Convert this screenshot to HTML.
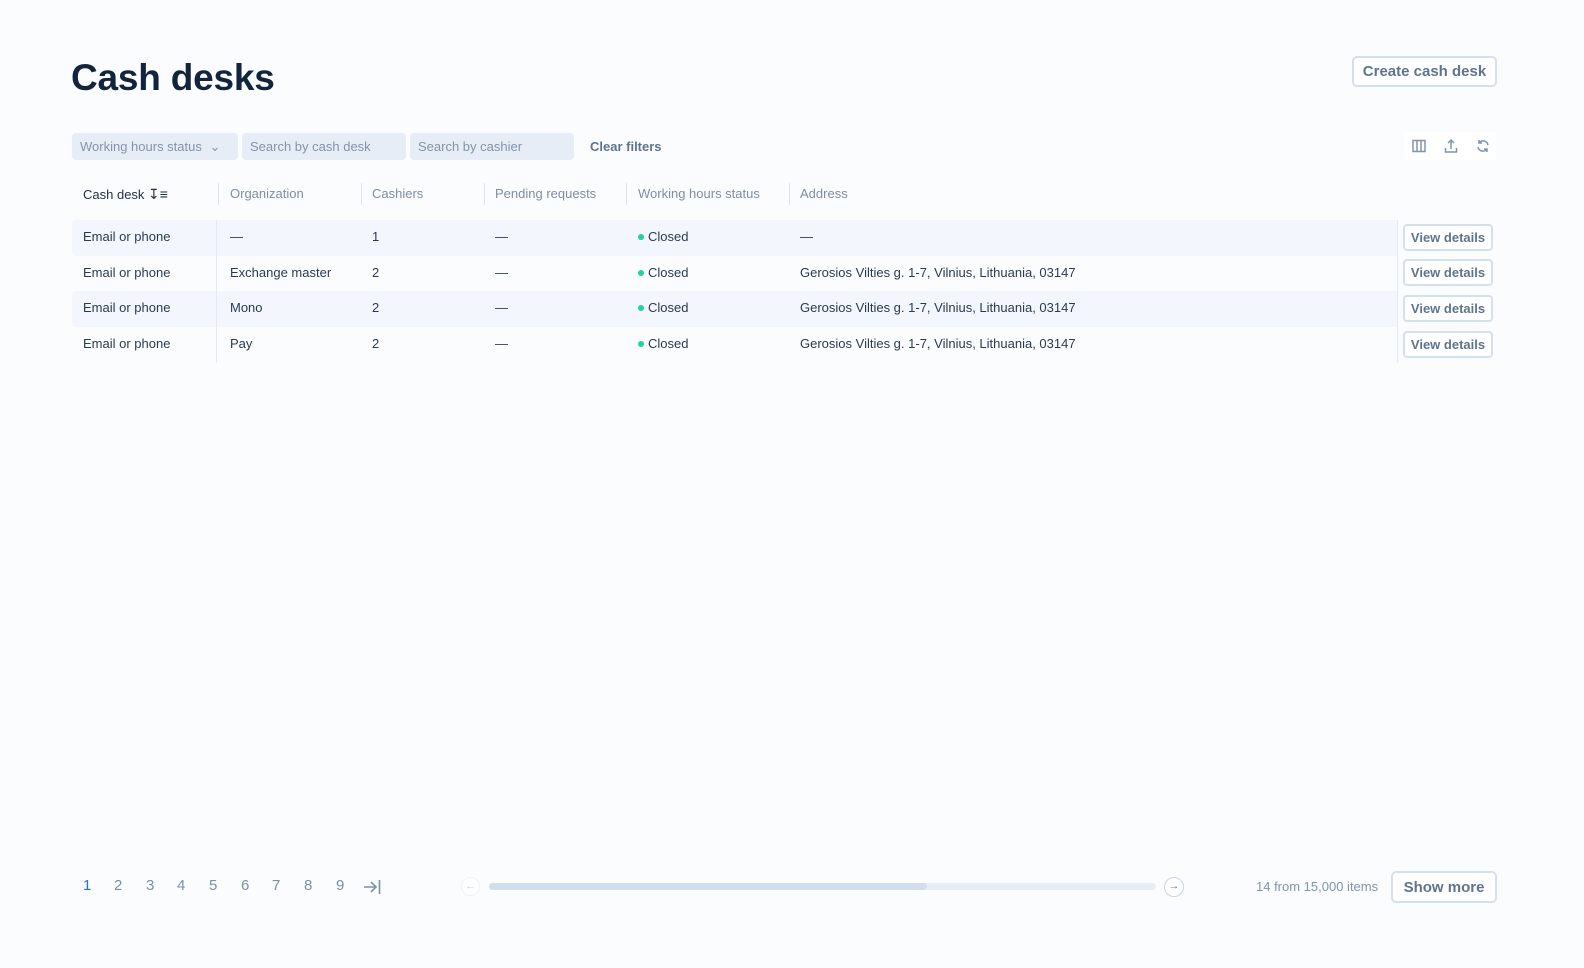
<!DOCTYPE html><html><head><style>
*{box-sizing:border-box;margin:0;padding:0}
body{width:1584px;height:968px;background:#fbfcfd;font-family:"Liberation Sans",sans-serif;position:relative;overflow:hidden;color:#27364d}
.a{position:absolute}
h1{position:absolute;left:71px;top:57px;font-size:37px;font-weight:bold;color:#15243d;letter-spacing:-0.2px}
.btn{position:absolute;border:2px solid #d5e0ee;border-radius:5px;background:#fff;color:#5f7490;font-weight:bold;display:flex;align-items:center;justify-content:center}
.f{position:absolute;top:133px;height:27px;background:#e6edf7;border-radius:4px;font-size:13px;color:#8394ad;padding-left:8px;line-height:27px}
.th{position:absolute;top:186px;font-size:13px;color:#7d8ea7}
.dv{position:absolute;top:183px;height:22px;width:1px;background:#dde5f0}
.row{position:absolute;left:72px;width:1325px;height:36px}
.c{position:absolute;font-size:13px;color:#2b3a52;line-height:36px}
.vd{position:absolute;left:1403px;width:90px;height:27px;border:2px solid #d5e0ee;border-radius:4px;background:#fff;font-size:13px;color:#5f7490;font-weight:bold;text-align:center;line-height:23px}
.dot{display:inline-block;width:6px;height:6px;border-radius:50%;background:#1ed3a0;margin-right:4px;vertical-align:1px}
.pg{position:absolute;top:877px;font-size:15px;color:#7d8ea7}
</style></head><body>
<h1>Cash desks</h1>
<div class="btn" style="left:1352px;top:56px;width:145px;height:31px;font-size:15px">Create cash desk</div>
<div class="f" style="left:72px;width:166px">Working hours status <span style="margin-left:4px">&#8964;</span></div>
<div class="f" style="left:242px;width:164px">Search by cash desk</div>
<div class="f" style="left:410px;width:164px">Search by cashier</div>
<div class="a" style="left:590px;top:139px;font-size:13px;font-weight:bold;color:#5f7490">Clear filters</div>
<div class="a" style="left:1404px;top:132px;width:92px;height:28px;background:#fff;border-radius:4px"></div>
<svg class="a" style="left:1411px;top:138px" width="16" height="16" viewBox="0 0 16 16" fill="none" stroke="#8294ad" stroke-width="1.5"><rect x="2" y="2.5" width="12" height="11"/><path d="M6 2.5v11M10 2.5v11"/></svg>
<svg class="a" style="left:1443px;top:138px" width="16" height="16" viewBox="0 0 16 16" fill="none" stroke="#8294ad" stroke-width="1.5"><path d="M8 11V2M5 5l3-3 3 3M2.5 10v4h11v-4"/></svg>
<svg class="a" style="left:1475px;top:138px" width="16" height="16" viewBox="0 0 16 16" fill="none" stroke="#8294ad" stroke-width="1.5"><path d="M13 7a5 5 0 0 0-9-2M3 9a5 5 0 0 0 9 2M4 2v3h3M12 14v-3H9"/></svg>
<div class="th" style="left:83px;color:#1f2e46">Cash desk <span style="font-size:14px">&#8615;&#8801;</span></div>
<div class="dv" style="left:218px"></div><div class="th" style="left:230px">Organization</div>
<div class="dv" style="left:361px"></div><div class="th" style="left:372px">Cashiers</div>
<div class="dv" style="left:484px"></div><div class="th" style="left:495px">Pending requests</div>
<div class="dv" style="left:626px"></div><div class="th" style="left:638px">Working hours status</div>
<div class="dv" style="left:789px"></div><div class="th" style="left:800px">Address</div>
<div class="row" style="top:220px;background:#f3f6fd;border-radius:4px 0 0 4px"></div>
<div class="row" style="top:291px;background:#f3f6fd;border-radius:4px 0 0 4px"></div>
<div class="a" style="left:216px;top:220px;width:1px;height:143px;background:#e3eaf4"></div>
<div class="a" style="left:1397px;top:220px;width:1px;height:143px;background:#e3eaf4"></div>
<div class="c" style="left:83px;top:219px">Email or phone</div><div class="c" style="left:230px;top:219px">—</div><div class="c" style="left:372px;top:219px">1</div><div class="c" style="left:495px;top:219px">—</div><div class="c" style="left:638px;top:219px"><span class="dot"></span>Closed</div><div class="c" style="left:800px;top:219px">—</div>
<div class="c" style="left:83px;top:255px">Email or phone</div><div class="c" style="left:230px;top:255px">Exchange master</div><div class="c" style="left:372px;top:255px">2</div><div class="c" style="left:495px;top:255px">—</div><div class="c" style="left:638px;top:255px"><span class="dot"></span>Closed</div><div class="c" style="left:800px;top:255px">Gerosios Vilties g. 1-7, Vilnius, Lithuania, 03147</div>
<div class="c" style="left:83px;top:290px">Email or phone</div><div class="c" style="left:230px;top:290px">Mono</div><div class="c" style="left:372px;top:290px">2</div><div class="c" style="left:495px;top:290px">—</div><div class="c" style="left:638px;top:290px"><span class="dot"></span>Closed</div><div class="c" style="left:800px;top:290px">Gerosios Vilties g. 1-7, Vilnius, Lithuania, 03147</div>
<div class="c" style="left:83px;top:326px">Email or phone</div><div class="c" style="left:230px;top:326px">Pay</div><div class="c" style="left:372px;top:326px">2</div><div class="c" style="left:495px;top:326px">—</div><div class="c" style="left:638px;top:326px"><span class="dot"></span>Closed</div><div class="c" style="left:800px;top:326px">Gerosios Vilties g. 1-7, Vilnius, Lithuania, 03147</div>
<div class="vd" style="top:224px">View details</div>
<div class="vd" style="top:259px">View details</div>
<div class="vd" style="top:295px">View details</div>
<div class="vd" style="top:331px">View details</div>
<div class="pg" style="left:83px;color:#2a6bf0">1</div>
<div class="pg" style="left:114px">2</div><div class="pg" style="left:146px">3</div><div class="pg" style="left:177px">4</div><div class="pg" style="left:209px">5</div><div class="pg" style="left:241px">6</div><div class="pg" style="left:272px">7</div><div class="pg" style="left:304px">8</div><div class="pg" style="left:336px">9</div>
<svg class="a" style="left:363px;top:878px" width="18" height="18" viewBox="0 0 18 18" fill="none" stroke="#7d8ea7" stroke-width="1.6"><path d="M1 9h12M8 4l5 5-5 5M16.5 2v14"/></svg>
<div class="a" style="left:461px;top:877px;width:19px;height:19px;border-radius:50%;background:#fff;border:1px solid #eef2f7;color:#c5d0de;font-size:11px;text-align:center;line-height:17px">&#8592;</div>
<div class="a" style="left:489px;top:883px;width:667px;height:7px;border-radius:4px;background:#e6edf7"></div>
<div class="a" style="left:489px;top:883px;width:438px;height:7px;border-radius:4px;background:#d2deeb"></div>
<div class="a" style="left:1164px;top:877px;width:20px;height:20px;border-radius:50%;background:#fff;border:1.5px solid #c9d5e4;color:#6a7d98;font-size:11px;text-align:center;line-height:17px;font-weight:bold">&#8594;</div>
<div class="a" style="left:1256px;top:879px;font-size:13px;color:#8394ad">14 from 15,000 items</div>
<div class="btn" style="left:1391px;top:871px;width:106px;height:32px;font-size:15px">Show more</div>
</body></html>
